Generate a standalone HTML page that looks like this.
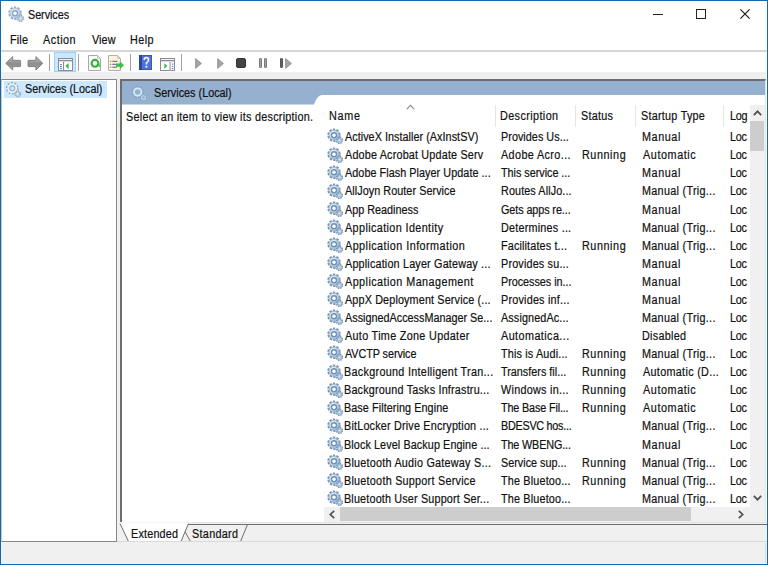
<!DOCTYPE html>
<html><head><meta charset="utf-8">
<style>
*{margin:0;padding:0;box-sizing:border-box}
html,body{width:768px;height:565px;overflow:hidden;background:#fff}
body{position:relative;font-family:"Liberation Sans",sans-serif;font-size:12px;color:#000}
.a{position:absolute}
.t{position:absolute;white-space:nowrap;line-height:18px;height:18px;color:#111;-webkit-text-stroke:0.2px #111}
.gi{position:absolute;left:327px;width:16px;height:16px}
#win{position:absolute;left:0;top:0;width:768px;height:565px;border:1px solid #1169b0;z-index:50;pointer-events:none}
.sep{position:absolute;top:105px;width:1px;height:22px;background:#e5e5e5}
.tsep{position:absolute;top:54px;width:1px;height:17px;background:#a0a0a0}
</style></head><body>
<svg width="0" height="0" style="position:absolute">
<defs>
<radialGradient id="gb" cx="0.35" cy="0.3" r="0.8"><stop offset="0" stop-color="#eef7fd"/><stop offset=".6" stop-color="#bcd9ee"/><stop offset="1" stop-color="#9dbfdc"/></radialGradient>
<g id="gear">
 <circle cx="7" cy="7.2" r="5.7" fill="none" stroke="#7893b3" stroke-width="2.0" stroke-dasharray="2.3 1.28"/>
 <circle cx="7" cy="7.2" r="5.0" fill="url(#gb)" stroke="#8aa6c4" stroke-width="0.7"/>
 <circle cx="7" cy="7.2" r="2.5" fill="none" stroke="#7590ad" stroke-width="1.5"/>
 <circle cx="7" cy="7.2" r="1.5" fill="#fafdff"/>
 <circle cx="12.5" cy="12.4" r="3.0" fill="none" stroke="#7591b2" stroke-width="1.5" stroke-dasharray="1.35 1.0"/>
 <circle cx="12.5" cy="12.4" r="2.4" fill="#aac8e0" stroke="#809dbd" stroke-width="0.6"/>
 <circle cx="12.5" cy="12.4" r="0.8" fill="#e0ecf6"/>
</g>
<linearGradient id="ag" x1="0" y1="0" x2="0" y2="1"><stop offset="0" stop-color="#c2c2c2"/><stop offset=".55" stop-color="#8c8c8c"/><stop offset="1" stop-color="#a8a8a8"/></linearGradient>
</defs>
</svg>
<div id="win"></div>

<!-- title bar -->
<svg class="a" style="left:8px;top:6px;width:16px;height:16px;opacity:.8"><use href="#gear"/></svg>
<div class="a" style="left:653px;top:14px;width:10px;height:1px;background:#222"></div>
<div class="a" style="left:696px;top:9px;width:10px;height:10px;border:1px solid #222"></div>
<svg class="a" style="left:740px;top:9px;width:10px;height:10px" viewBox="0 0 10 10"><path d="M.4 .4L9.6 9.6M9.6 .4L.4 9.6" stroke="#1a1a1a" stroke-width="1.15"/></svg>

<!-- menu sep -->
<div class="a" style="left:1px;top:50px;width:766px;height:2px;background:#d6d6d6"></div>

<!-- toolbar -->
<div class="a" style="left:1px;top:72px;width:766px;height:7px;background:#efefef"></div>
<svg class="a" style="left:5px;top:56px;width:17px;height:15px" viewBox="0 0 17 15"><path d="M0.8 7.3L7.7 0.6V4.3H15Q15.6 4.3 15.6 4.9V9.9Q15.6 10.6 15 10.6H7.7V14Z" fill="url(#ag)" stroke="#7c7c7c" stroke-width=".9"/></svg>
<svg class="a" style="left:27px;top:56px;width:17px;height:15px" viewBox="0 0 17 15"><path d="M15.8 7.3L8.9 0.6V4.3H1.6Q1 4.3 1 4.9V9.9Q1 10.6 1.6 10.6H8.9V14Z" fill="url(#ag)" stroke="#7c7c7c" stroke-width=".9"/></svg>
<div class="tsep" style="left:49px"></div>
<div class="a" style="left:54px;top:52px;width:22px;height:20px;background:#cce8ff;border:1px solid #99d1ff"></div>
<svg class="a" style="left:58px;top:58px;width:15px;height:13px" viewBox="0 0 15 13"><rect x=".5" y=".5" width="14" height="12" fill="#fff" stroke="#868b94"/><rect x="1" y="1" width="13" height="1" fill="#eef0f4"/><rect x="1" y="2" width="13" height="1.1" fill="#8a8f98"/><rect x="1" y="3.1" width="13" height="1.1" fill="#d4d8e0"/><rect x="5" y="4" width="1.1" height="8.5" fill="#868b94"/><rect x="2" y="6" width="2" height="1.1" fill="#5b8fd0"/><rect x="2" y="8" width="2" height="1.1" fill="#5b8fd0"/><rect x="2" y="10" width="2" height="1.1" fill="#5b8fd0"/><path d="M10.6 5L7.4 8.1L10.6 11.2Z" fill="#42b542"/></svg>
<div class="tsep" style="left:78px"></div>
<svg class="a" style="left:88px;top:55px;width:14px;height:16px" viewBox="0 0 14 16"><path d="M.5 .5H9.5L12.5 3.5V15.5H.5Z" fill="#fbfbfb" stroke="#a8a8a8"/><path d="M9.5 .5V3.5H12.5" fill="none" stroke="#c8c8c8"/><circle cx="7" cy="8.3" r="3.4" fill="none" stroke="#34b03c" stroke-width="2.1"/><path d="M8.2 9.6L12.2 12.6L11.2 8.4Z" fill="#22c02a"/></svg>
<svg class="a" style="left:108px;top:55px;width:17px;height:16px" viewBox="0 0 17 16"><path d="M.5 .5H9.5L12.5 3.5V15.5H.5Z" fill="#fcf4d6" stroke="#b0b0b0"/><path d="M9.5 .5V3.5H12.5" fill="none" stroke="#c8c8c8"/><path d="M2 6.3H3.3M2 9.3H3.3M2 12.2H3.3" stroke="#777" stroke-width="1"/><path d="M4.3 6.3H9.5M4.3 9.3H9M4.3 12.2H9" stroke="#5c5c98" stroke-width="1"/><path d="M8 8.6H11.8V6.2L16 10.2L11.8 14.2V11.8H8Z" fill="#3cbf42"/></svg>
<div class="tsep" style="left:130px"></div>
<svg class="a" style="left:139px;top:55px;width:13px;height:15px" viewBox="0 0 13 15"><rect x="0" y="0" width="13" height="15" fill="#4f72d6"/><rect x="0" y="0" width="3" height="15" fill="#2b47a6"/><rect x="0" y="0" width="13" height="15" fill="none" stroke="#2a3f96" stroke-width="1"/><path d="M5.2 5Q5.2 2.6 7.4 2.6Q9.6 2.6 9.6 4.8Q9.6 6.2 8.2 7.1Q7.4 7.7 7.4 9V9.6" fill="none" stroke="#f4f6ff" stroke-width="1.6"/><rect x="6.5" y="10.8" width="1.8" height="1.8" fill="#f4f6ff"/></svg>
<svg class="a" style="left:160px;top:58px;width:15px;height:13px" viewBox="0 0 15 13"><rect x=".5" y=".5" width="14" height="12" fill="#fff" stroke="#868b94"/><rect x="1" y="1" width="13" height="1" fill="#eef0f4"/><rect x="1" y="2" width="13" height="1.1" fill="#8a8f98"/><rect x="1" y="3.1" width="13" height="1.1" fill="#d4d8e0"/><rect x="9.3" y="4" width="1.6" height="8.5" fill="#b8bcc4"/><rect x="11.8" y="5.6" width="1.6" height="1.1" fill="#5b8fd0"/><rect x="11.8" y="7.8" width="1.6" height="1.1" fill="#5b8fd0"/><rect x="11.8" y="10" width="1.6" height="1.1" fill="#5b8fd0"/><path d="M4.3 5.3L7.4 8L4.3 10.8Z" fill="#42b542"/></svg>
<div class="tsep" style="left:181px"></div>
<svg class="a" style="left:195px;top:58px;width:7px;height:11px" viewBox="0 0 7 11"><path d="M.6 .6L6.4 5.5L.6 10.4Z" fill="#a4a4a4" stroke="#8c8c8c" stroke-width=".8" stroke-linejoin="round"/></svg>
<svg class="a" style="left:217px;top:58px;width:7px;height:11px" viewBox="0 0 7 11"><path d="M.6 .6L6.4 5.5L.6 10.4Z" fill="#a4a4a4" stroke="#8c8c8c" stroke-width=".8" stroke-linejoin="round"/></svg>
<div class="a" style="left:236px;top:58px;width:10px;height:10px;background:#444;border:1px solid #333;border-radius:2px"></div>
<div class="a" style="left:259px;top:58px;width:3px;height:10px;background:#a0a0a0;border:1px solid #7c7c7c;border-radius:1px"></div>
<div class="a" style="left:264px;top:58px;width:3px;height:10px;background:#a0a0a0;border:1px solid #7c7c7c;border-radius:1px"></div>
<div class="a" style="left:280px;top:58px;width:3px;height:10px;background:#666;border:1px solid #555;border-radius:1px"></div>
<svg class="a" style="left:285px;top:58px;width:7px;height:11px" viewBox="0 0 7 11"><path d="M.6 .6L6.4 5.5L.6 10.4Z" fill="#a4a4a4" stroke="#8c8c8c" stroke-width=".8" stroke-linejoin="round"/></svg>

<!-- main gray background -->
<div class="a" style="left:1px;top:79px;width:766px;height:485px;background:#f0f0f0"></div>

<!-- left pane -->
<div class="a" style="left:1px;top:79px;width:116px;height:463px;background:#fff;border-top:1px solid #828790;border-right:1px solid #828790;border-bottom:1px solid #828790;border-left:1px solid #c8c8c8"></div>
<div class="a" style="left:4px;top:81px;width:103px;height:17px;background:#cce8ff"></div>
<svg class="a" style="left:4px;top:80px;width:20px;height:20px" viewBox="0 0 20 20"><circle cx="8.3" cy="8.3" r="5.6" fill="none" stroke="#8a9cb0" stroke-width="1.4" stroke-dasharray="1.7 1.8"/><circle cx="8.3" cy="8.3" r="3.9" fill="none" stroke="#e0f4fa" stroke-width="2"/><circle cx="8.3" cy="8.3" r="2.6" fill="none" stroke="#8896a8" stroke-width=".9"/><circle cx="13.6" cy="14" r="2.9" fill="none" stroke="#8a9cb0" stroke-width="1.2" stroke-dasharray="1.2 1.1"/><circle cx="13.6" cy="14" r="2" fill="#d6e8f4" stroke="#a8bccf" stroke-width="1"/></svg>

<!-- right pane -->
<div class="a" style="left:120px;top:79px;width:646px;height:445px;background:#fff;border-top:2px solid #6d6d6d;border-left:2px solid #6d6d6d;border-right:1px solid #e6e6e6"></div>
<div class="a" style="left:766px;top:72px;width:1px;height:451px;background:#fff"></div>
<svg class="a" style="left:122px;top:81px;width:643px;height:24px" viewBox="0 0 643 24"><path d="M0 0H643V14H200.5Q195 14 192 23.5H0Z" fill="#96b0d0"/></svg>
<svg class="a" style="left:128px;top:84px;width:22px;height:20px" viewBox="0 0 22 20"><circle cx="9.7" cy="8" r="5.4" fill="none" stroke="#86a0c0" stroke-width="1.3" stroke-dasharray="1.6 1.8"/><circle cx="9.7" cy="8" r="3.7" fill="none" stroke="#d4ecfa" stroke-width="1.8"/><circle cx="15.5" cy="13.6" r="2.9" fill="none" stroke="#7f9aba" stroke-width="1.1" stroke-dasharray="1.1 1.1"/><circle cx="15.5" cy="13.6" r="2" fill="none" stroke="#b8d2e8" stroke-width="1.2"/></svg>

<div class="t" style="left:27.70px;top:6.30px;letter-spacing:-0.056px;transform:scaleX(0.9);transform-origin:0 0">Services</div>
<div class="t" style="left:10.00px;top:30.75px;letter-spacing:0.185px;transform:scaleX(0.9);transform-origin:0 0">File</div>
<div class="t" style="left:43.20px;top:30.75px;letter-spacing:0.578px;transform:scaleX(0.9);transform-origin:0 0">Action</div>
<div class="t" style="left:91.50px;top:30.75px;letter-spacing:0.111px;transform:scaleX(0.9);transform-origin:0 0">View</div>
<div class="t" style="left:129.90px;top:30.75px;letter-spacing:0.500px;transform:scaleX(0.9);transform-origin:0 0">Help</div>
<div class="t" style="left:24.90px;top:80.20px;letter-spacing:0.000px;transform:scaleX(0.9);transform-origin:0 0">Services (Local)</div>
<div class="t" style="left:154.40px;top:83.90px;letter-spacing:0.015px;transform:scaleX(0.9);transform-origin:0 0">Services (Local)</div>
<div class="t" style="left:125.60px;top:107.80px;letter-spacing:0.292px;transform:scaleX(0.9);transform-origin:0 0">Select an item to view its description.</div>

<!-- list view -->
<div class="a" style="left:0;top:0;width:750px;height:507px;overflow:hidden">
<svg class="a" style="left:406px;top:104px;width:9px;height:6px" viewBox="0 0 9 6"><path d="M.8 5.2L4.5 1.3L8.2 5.2" fill="none" stroke="#8a8a8a" stroke-width="1.1"/></svg>
<div class="sep" style="left:495px"></div>
<div class="sep" style="left:575px"></div>
<div class="sep" style="left:635px"></div>
<div class="sep" style="left:723px"></div>
<svg class="gi" style="top:128.46px"><use href="#gear"/></svg>
<svg class="gi" style="top:146.54px"><use href="#gear"/></svg>
<svg class="gi" style="top:164.62px"><use href="#gear"/></svg>
<svg class="gi" style="top:182.70px"><use href="#gear"/></svg>
<svg class="gi" style="top:200.78px"><use href="#gear"/></svg>
<svg class="gi" style="top:218.86px"><use href="#gear"/></svg>
<svg class="gi" style="top:236.94px"><use href="#gear"/></svg>
<svg class="gi" style="top:255.02px"><use href="#gear"/></svg>
<svg class="gi" style="top:273.10px"><use href="#gear"/></svg>
<svg class="gi" style="top:291.18px"><use href="#gear"/></svg>
<svg class="gi" style="top:309.26px"><use href="#gear"/></svg>
<svg class="gi" style="top:327.34px"><use href="#gear"/></svg>
<svg class="gi" style="top:345.42px"><use href="#gear"/></svg>
<svg class="gi" style="top:363.50px"><use href="#gear"/></svg>
<svg class="gi" style="top:381.58px"><use href="#gear"/></svg>
<svg class="gi" style="top:399.66px"><use href="#gear"/></svg>
<svg class="gi" style="top:417.74px"><use href="#gear"/></svg>
<svg class="gi" style="top:435.82px"><use href="#gear"/></svg>
<svg class="gi" style="top:453.90px"><use href="#gear"/></svg>
<svg class="gi" style="top:471.98px"><use href="#gear"/></svg>
<svg class="gi" style="top:490.06px"><use href="#gear"/></svg>
<div class="t" style="left:329.30px;top:106.80px;letter-spacing:0.778px;transform:scaleX(0.9);transform-origin:0 0">Name</div>
<div class="t" style="left:500.35px;top:106.80px;letter-spacing:0.450px;transform:scaleX(0.9);transform-origin:0 0">Description</div>
<div class="t" style="left:581.00px;top:106.80px;letter-spacing:0.267px;transform:scaleX(0.9);transform-origin:0 0">Status</div>
<div class="t" style="left:641.00px;top:106.80px;letter-spacing:0.283px;transform:scaleX(0.9);transform-origin:0 0">Startup Type</div>
<div class="t" style="left:729.60px;top:106.80px;letter-spacing:-0.350px;transform:scaleX(0.9);transform-origin:0 0">Log</div>
<div class="t" style="left:345.20px;top:128.20px;letter-spacing:0.049px;transform:scaleX(0.9);transform-origin:0 0">ActiveX Installer (AxInstSV)</div>
<div class="t" style="left:500.50px;top:128.20px;letter-spacing:0.043px;transform:scaleX(0.9);transform-origin:0 0">Provides Us...</div>
<div class="t" style="left:641.70px;top:128.20px;letter-spacing:0.644px;transform:scaleX(0.9);transform-origin:0 0">Manual</div>
<div class="t" style="left:729.60px;top:128.20px;letter-spacing:-0.350px;transform:scaleX(0.9);transform-origin:0 0">Loc</div>
<div class="t" style="left:345.20px;top:146.28px;letter-spacing:0.199px;transform:scaleX(0.9);transform-origin:0 0">Adobe Acrobat Update Serv</div>
<div class="t" style="left:501.40px;top:146.28px;letter-spacing:0.435px;transform:scaleX(0.9);transform-origin:0 0">Adobe Acro...</div>
<div class="t" style="left:581.60px;top:146.28px;letter-spacing:0.630px;transform:scaleX(0.9);transform-origin:0 0">Running</div>
<div class="t" style="left:642.60px;top:146.28px;letter-spacing:0.653px;transform:scaleX(0.9);transform-origin:0 0">Automatic</div>
<div class="t" style="left:729.60px;top:146.28px;letter-spacing:-0.350px;transform:scaleX(0.9);transform-origin:0 0">Loc</div>
<div class="t" style="left:345.20px;top:164.36px;letter-spacing:0.063px;transform:scaleX(0.9);transform-origin:0 0">Adobe Flash Player Update ...</div>
<div class="t" style="left:501.40px;top:164.36px;letter-spacing:-0.022px;transform:scaleX(0.9);transform-origin:0 0">This service ...</div>
<div class="t" style="left:641.70px;top:164.36px;letter-spacing:0.644px;transform:scaleX(0.9);transform-origin:0 0">Manual</div>
<div class="t" style="left:729.60px;top:164.36px;letter-spacing:-0.350px;transform:scaleX(0.9);transform-origin:0 0">Loc</div>
<div class="t" style="left:345.20px;top:182.44px;letter-spacing:0.069px;transform:scaleX(0.9);transform-origin:0 0">AllJoyn Router Service</div>
<div class="t" style="left:500.50px;top:182.44px;letter-spacing:0.119px;transform:scaleX(0.9);transform-origin:0 0">Routes AllJo...</div>
<div class="t" style="left:641.70px;top:182.44px;letter-spacing:0.333px;transform:scaleX(0.9);transform-origin:0 0">Manual (Trig...</div>
<div class="t" style="left:729.60px;top:182.44px;letter-spacing:-0.350px;transform:scaleX(0.9);transform-origin:0 0">Loc</div>
<div class="t" style="left:345.20px;top:200.52px;letter-spacing:0.009px;transform:scaleX(0.9);transform-origin:0 0">App Readiness</div>
<div class="t" style="left:501.40px;top:200.52px;letter-spacing:-0.095px;transform:scaleX(0.9);transform-origin:0 0">Gets apps re...</div>
<div class="t" style="left:641.70px;top:200.52px;letter-spacing:0.644px;transform:scaleX(0.9);transform-origin:0 0">Manual</div>
<div class="t" style="left:729.60px;top:200.52px;letter-spacing:-0.350px;transform:scaleX(0.9);transform-origin:0 0">Loc</div>
<div class="t" style="left:345.20px;top:218.60px;letter-spacing:0.433px;transform:scaleX(0.9);transform-origin:0 0">Application Identity</div>
<div class="t" style="left:500.50px;top:218.60px;letter-spacing:0.248px;transform:scaleX(0.9);transform-origin:0 0">Determines ...</div>
<div class="t" style="left:641.70px;top:218.60px;letter-spacing:0.333px;transform:scaleX(0.9);transform-origin:0 0">Manual (Trig...</div>
<div class="t" style="left:729.60px;top:218.60px;letter-spacing:-0.350px;transform:scaleX(0.9);transform-origin:0 0">Loc</div>
<div class="t" style="left:345.20px;top:236.68px;letter-spacing:0.500px;transform:scaleX(0.9);transform-origin:0 0">Application Information</div>
<div class="t" style="left:500.50px;top:236.68px;letter-spacing:0.170px;transform:scaleX(0.9);transform-origin:0 0">Facilitates t...</div>
<div class="t" style="left:581.60px;top:236.68px;letter-spacing:0.630px;transform:scaleX(0.9);transform-origin:0 0">Running</div>
<div class="t" style="left:641.70px;top:236.68px;letter-spacing:0.333px;transform:scaleX(0.9);transform-origin:0 0">Manual (Trig...</div>
<div class="t" style="left:729.60px;top:236.68px;letter-spacing:-0.350px;transform:scaleX(0.9);transform-origin:0 0">Loc</div>
<div class="t" style="left:345.20px;top:254.76px;letter-spacing:0.198px;transform:scaleX(0.9);transform-origin:0 0">Application Layer Gateway ...</div>
<div class="t" style="left:500.50px;top:254.76px;letter-spacing:0.197px;transform:scaleX(0.9);transform-origin:0 0">Provides su...</div>
<div class="t" style="left:641.70px;top:254.76px;letter-spacing:0.644px;transform:scaleX(0.9);transform-origin:0 0">Manual</div>
<div class="t" style="left:729.60px;top:254.76px;letter-spacing:-0.350px;transform:scaleX(0.9);transform-origin:0 0">Loc</div>
<div class="t" style="left:345.20px;top:272.84px;letter-spacing:0.497px;transform:scaleX(0.9);transform-origin:0 0">Application Management</div>
<div class="t" style="left:500.50px;top:272.84px;letter-spacing:-0.024px;transform:scaleX(0.9);transform-origin:0 0">Processes in...</div>
<div class="t" style="left:641.70px;top:272.84px;letter-spacing:0.644px;transform:scaleX(0.9);transform-origin:0 0">Manual</div>
<div class="t" style="left:729.60px;top:272.84px;letter-spacing:-0.350px;transform:scaleX(0.9);transform-origin:0 0">Loc</div>
<div class="t" style="left:345.20px;top:290.92px;letter-spacing:0.160px;transform:scaleX(0.9);transform-origin:0 0">AppX Deployment Service (...</div>
<div class="t" style="left:500.50px;top:290.92px;letter-spacing:0.238px;transform:scaleX(0.9);transform-origin:0 0">Provides inf...</div>
<div class="t" style="left:641.70px;top:290.92px;letter-spacing:0.644px;transform:scaleX(0.9);transform-origin:0 0">Manual</div>
<div class="t" style="left:729.60px;top:290.92px;letter-spacing:-0.350px;transform:scaleX(0.9);transform-origin:0 0">Loc</div>
<div class="t" style="left:345.20px;top:309.00px;letter-spacing:0.013px;transform:scaleX(0.9);transform-origin:0 0">AssignedAccessManager Se...</div>
<div class="t" style="left:501.40px;top:309.00px;letter-spacing:0.139px;transform:scaleX(0.9);transform-origin:0 0">AssignedAc...</div>
<div class="t" style="left:641.70px;top:309.00px;letter-spacing:0.333px;transform:scaleX(0.9);transform-origin:0 0">Manual (Trig...</div>
<div class="t" style="left:729.60px;top:309.00px;letter-spacing:-0.350px;transform:scaleX(0.9);transform-origin:0 0">Loc</div>
<div class="t" style="left:345.20px;top:327.08px;letter-spacing:0.354px;transform:scaleX(0.9);transform-origin:0 0">Auto Time Zone Updater</div>
<div class="t" style="left:501.40px;top:327.08px;letter-spacing:0.481px;transform:scaleX(0.9);transform-origin:0 0">Automatica...</div>
<div class="t" style="left:641.70px;top:327.08px;letter-spacing:0.317px;transform:scaleX(0.9);transform-origin:0 0">Disabled</div>
<div class="t" style="left:729.60px;top:327.08px;letter-spacing:-0.350px;transform:scaleX(0.9);transform-origin:0 0">Loc</div>
<div class="t" style="left:345.20px;top:345.16px;letter-spacing:-0.074px;transform:scaleX(0.9);transform-origin:0 0">AVCTP service</div>
<div class="t" style="left:501.40px;top:345.16px;letter-spacing:0.190px;transform:scaleX(0.9);transform-origin:0 0">This is Audi...</div>
<div class="t" style="left:581.60px;top:345.16px;letter-spacing:0.630px;transform:scaleX(0.9);transform-origin:0 0">Running</div>
<div class="t" style="left:641.70px;top:345.16px;letter-spacing:0.333px;transform:scaleX(0.9);transform-origin:0 0">Manual (Trig...</div>
<div class="t" style="left:729.60px;top:345.16px;letter-spacing:-0.350px;transform:scaleX(0.9);transform-origin:0 0">Loc</div>
<div class="t" style="left:344.30px;top:363.24px;letter-spacing:0.333px;transform:scaleX(0.9);transform-origin:0 0">Background Intelligent Tran...</div>
<div class="t" style="left:501.40px;top:363.24px;letter-spacing:0.015px;transform:scaleX(0.9);transform-origin:0 0">Transfers fil...</div>
<div class="t" style="left:581.60px;top:363.24px;letter-spacing:0.630px;transform:scaleX(0.9);transform-origin:0 0">Running</div>
<div class="t" style="left:642.60px;top:363.24px;letter-spacing:0.349px;transform:scaleX(0.9);transform-origin:0 0">Automatic (D...</div>
<div class="t" style="left:729.60px;top:363.24px;letter-spacing:-0.350px;transform:scaleX(0.9);transform-origin:0 0">Loc</div>
<div class="t" style="left:344.30px;top:381.32px;letter-spacing:0.222px;transform:scaleX(0.9);transform-origin:0 0">Background Tasks Infrastru...</div>
<div class="t" style="left:501.40px;top:381.32px;letter-spacing:0.315px;transform:scaleX(0.9);transform-origin:0 0">Windows in...</div>
<div class="t" style="left:581.60px;top:381.32px;letter-spacing:0.630px;transform:scaleX(0.9);transform-origin:0 0">Running</div>
<div class="t" style="left:642.60px;top:381.32px;letter-spacing:0.653px;transform:scaleX(0.9);transform-origin:0 0">Automatic</div>
<div class="t" style="left:729.60px;top:381.32px;letter-spacing:-0.350px;transform:scaleX(0.9);transform-origin:0 0">Loc</div>
<div class="t" style="left:344.30px;top:399.40px;letter-spacing:0.089px;transform:scaleX(0.9);transform-origin:0 0">Base Filtering Engine</div>
<div class="t" style="left:501.40px;top:399.40px;letter-spacing:-0.159px;transform:scaleX(0.9);transform-origin:0 0">The Base Fil...</div>
<div class="t" style="left:581.60px;top:399.40px;letter-spacing:0.630px;transform:scaleX(0.9);transform-origin:0 0">Running</div>
<div class="t" style="left:642.60px;top:399.40px;letter-spacing:0.653px;transform:scaleX(0.9);transform-origin:0 0">Automatic</div>
<div class="t" style="left:729.60px;top:399.40px;letter-spacing:-0.350px;transform:scaleX(0.9);transform-origin:0 0">Loc</div>
<div class="t" style="left:344.30px;top:417.48px;letter-spacing:0.215px;transform:scaleX(0.9);transform-origin:0 0">BitLocker Drive Encryption ...</div>
<div class="t" style="left:500.50px;top:417.48px;letter-spacing:-0.287px;transform:scaleX(0.9);transform-origin:0 0">BDESVC hos...</div>
<div class="t" style="left:641.70px;top:417.48px;letter-spacing:0.333px;transform:scaleX(0.9);transform-origin:0 0">Manual (Trig...</div>
<div class="t" style="left:729.60px;top:417.48px;letter-spacing:-0.350px;transform:scaleX(0.9);transform-origin:0 0">Loc</div>
<div class="t" style="left:344.30px;top:435.56px;letter-spacing:0.107px;transform:scaleX(0.9);transform-origin:0 0">Block Level Backup Engine ...</div>
<div class="t" style="left:501.40px;top:435.56px;letter-spacing:-0.152px;transform:scaleX(0.9);transform-origin:0 0">The WBENG...</div>
<div class="t" style="left:641.70px;top:435.56px;letter-spacing:0.644px;transform:scaleX(0.9);transform-origin:0 0">Manual</div>
<div class="t" style="left:729.60px;top:435.56px;letter-spacing:-0.350px;transform:scaleX(0.9);transform-origin:0 0">Loc</div>
<div class="t" style="left:344.30px;top:453.64px;letter-spacing:0.263px;transform:scaleX(0.9);transform-origin:0 0">Bluetooth Audio Gateway S...</div>
<div class="t" style="left:500.50px;top:453.64px;letter-spacing:0.009px;transform:scaleX(0.9);transform-origin:0 0">Service sup...</div>
<div class="t" style="left:581.60px;top:453.64px;letter-spacing:0.630px;transform:scaleX(0.9);transform-origin:0 0">Running</div>
<div class="t" style="left:641.70px;top:453.64px;letter-spacing:0.333px;transform:scaleX(0.9);transform-origin:0 0">Manual (Trig...</div>
<div class="t" style="left:729.60px;top:453.64px;letter-spacing:-0.350px;transform:scaleX(0.9);transform-origin:0 0">Loc</div>
<div class="t" style="left:344.30px;top:471.72px;letter-spacing:0.278px;transform:scaleX(0.9);transform-origin:0 0">Bluetooth Support Service</div>
<div class="t" style="left:501.40px;top:471.72px;letter-spacing:0.197px;transform:scaleX(0.9);transform-origin:0 0">The Bluetoo...</div>
<div class="t" style="left:581.60px;top:471.72px;letter-spacing:0.630px;transform:scaleX(0.9);transform-origin:0 0">Running</div>
<div class="t" style="left:641.70px;top:471.72px;letter-spacing:0.333px;transform:scaleX(0.9);transform-origin:0 0">Manual (Trig...</div>
<div class="t" style="left:729.60px;top:471.72px;letter-spacing:-0.350px;transform:scaleX(0.9);transform-origin:0 0">Loc</div>
<div class="t" style="left:344.30px;top:489.80px;letter-spacing:0.187px;transform:scaleX(0.9);transform-origin:0 0">Bluetooth User Support Ser...</div>
<div class="t" style="left:501.40px;top:489.80px;letter-spacing:0.197px;transform:scaleX(0.9);transform-origin:0 0">The Bluetoo...</div>
<div class="t" style="left:641.70px;top:489.80px;letter-spacing:0.333px;transform:scaleX(0.9);transform-origin:0 0">Manual (Trig...</div>
<div class="t" style="left:729.60px;top:489.80px;letter-spacing:-0.350px;transform:scaleX(0.9);transform-origin:0 0">Loc</div>
</div>

<!-- vertical scrollbar -->
<div class="a" style="left:750px;top:105px;width:15px;height:402px;background:#f0f0f0"></div>
<div class="a" style="left:750px;top:121px;width:14px;height:30px;background:#cdcdcd"></div>
<svg class="a" style="left:753px;top:110px;width:9px;height:6px" viewBox="0 0 9 6"><path d="M.8 5.2L4.5 1.3L8.2 5.2" fill="none" stroke="#505050" stroke-width="1.7"/></svg>
<svg class="a" style="left:753px;top:495px;width:9px;height:6px" viewBox="0 0 9 6"><path d="M.8 .8L4.5 4.7L8.2 .8" fill="none" stroke="#505050" stroke-width="1.7"/></svg>
<!-- horizontal scrollbar -->
<div class="a" style="left:324px;top:507px;width:441px;height:15px;background:#f0f0f0"></div>
<div class="a" style="left:340px;top:507px;width:351px;height:14px;background:#cdcdcd"></div>
<svg class="a" style="left:329px;top:510px;width:6px;height:9px" viewBox="0 0 6 9"><path d="M5.2 .8L1.3 4.5L5.2 8.2" fill="none" stroke="#505050" stroke-width="1.7"/></svg>
<svg class="a" style="left:738px;top:510px;width:6px;height:9px" viewBox="0 0 6 9"><path d="M.8 .8L4.7 4.5L.8 8.2" fill="none" stroke="#505050" stroke-width="1.7"/></svg>

<!-- tabs -->
<div class="a" style="left:120px;top:522px;width:647px;height:19px;background:#f0f0f0"></div>
<div class="a" style="left:122px;top:522px;width:644px;height:1px;background:#e3e3e3"></div>
<svg class="a" style="left:118px;top:522px;width:649px;height:20px" viewBox="0 0 649 20">
 <path d="M63 2.5H129.5L122.5 19.5H72.5Z" fill="#f0f0f0" stroke="#6d6d6d" stroke-width="1"/>
 <path d="M128.5 2.5H649" stroke="#6d6d6d" stroke-width="1"/>
 <path d="M2 1.5L10.5 19.5H63L70.5 1.5" fill="#fff" stroke="#6d6d6d" stroke-width="1"/>
 <path d="M2.5 1L70.5 1" stroke="#fff" stroke-width="1.5"/>
</svg>
<div class="t" style="left:130.50px;top:524.80px;letter-spacing:0.222px;transform:scaleX(0.9);transform-origin:0 0">Extended</div>
<div class="t" style="left:191.60px;top:524.80px;letter-spacing:0.349px;transform:scaleX(0.9);transform-origin:0 0">Standard</div>

<!-- status bar -->
<div class="a" style="left:117px;top:541px;width:650px;height:1px;background:#dadada"></div>
<div class="a" style="left:765px;top:543px;width:1px;height:20px;background:#d9d9d9"></div>

</body></html>
